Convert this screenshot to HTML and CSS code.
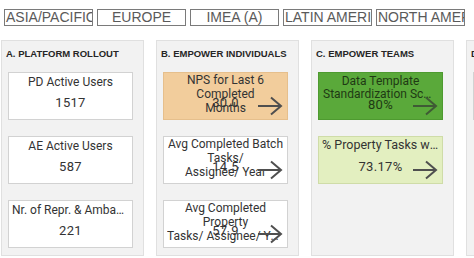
FILE: index.html
```html
<!DOCTYPE html>
<html lang="en">
<head>
    <meta charset="UTF-8">
    <title>Rollout Dashboard</title>
    <link rel="stylesheet" href="styles.css">
</head>
<body>
    <div class="slicers">
        <div class="slicer">ASIA/PACIFIC</div>
        <div class="slicer">EUROPE</div>
        <div class="slicer">IMEA (A)</div>
        <div class="slicer">LATIN AMERICA</div>
        <div class="slicer">NORTH AMERICA</div>
    </div>

    <div class="panels">
        <div class="panel">
            <div class="panel-title">A. PLATFORM ROLLOUT</div>
            <div class="cards">
                <div class="card single">
                    <div class="card-title"><span>PD Active Users</span></div>
                    <div class="card-value">1517</div>
                </div>
                <div class="card single">
                    <div class="card-title"><span>AE Active Users</span></div>
                    <div class="card-value">587</div>
                </div>
                <div class="card single">
                    <div class="card-title"><span>Nr. of Repr. &amp; Ambassadors</span></div>
                    <div class="card-value">221</div>
                </div>
            </div>
        </div>

        <div class="panel">
            <div class="panel-title">B. EMPOWER INDIVIDUALS</div>
            <div class="cards">
                <div class="card orange">
                    <div class="card-title"><span>NPS for Last 6</span><span>Completed</span><span>Months</span></div>
                    <div class="card-value">30.0</div>
                    <svg class="card-arrow" width="26" height="20" viewBox="0 0 26 20"><path d="M1 10H24M14 1.5L24 10L14 18.5"/></svg>
                </div>
                <div class="card">
                    <div class="card-title"><span>Avg Completed Batch</span><span>Tasks/</span><span>Assignee/ Year</span></div>
                    <div class="card-value">14.5</div>
                    <svg class="card-arrow" width="26" height="20" viewBox="0 0 26 20"><path d="M1 10H24M14 1.5L24 10L14 18.5"/></svg>
                </div>
                <div class="card">
                    <div class="card-title"><span>Avg Completed</span><span>Property</span><span>Tasks/ Assignee/ Year</span></div>
                    <div class="card-value">57.9</div>
                    <svg class="card-arrow" width="26" height="20" viewBox="0 0 26 20"><path d="M1 10H24M14 1.5L24 10L14 18.5"/></svg>
                </div>
            </div>
        </div>

        <div class="panel">
            <div class="panel-title">C. EMPOWER TEAMS</div>
            <div class="cards">
                <div class="card green">
                    <div class="card-title tight"><span>Data Template</span><span>Standardization Score</span></div>
                    <div class="card-value">80%</div>
                    <svg class="card-arrow" width="26" height="20" viewBox="0 0 26 20"><path d="M1 10H24M14 1.5L24 10L14 18.5"/></svg>
                </div>
                <div class="card lime">
                    <div class="card-title"><span>% Property Tasks with Template</span></div>
                    <div class="card-value">73.17%</div>
                    <svg class="card-arrow" width="26" height="20" viewBox="0 0 26 20"><path d="M1 10H24M14 1.5L24 10L14 18.5"/></svg>
                </div>
            </div>
        </div>

        <div class="panel">
            <div class="panel-title">D. ADOPTION</div>
            <div class="cards">
                <div class="card single">
                    <div class="card-title"><span>Active Users</span></div>
                    <div class="card-value">0</div>
                </div>
            </div>
        </div>
    </div>
</body>
</html>
```

FILE: styles.css
```css
* { box-sizing: border-box; margin: 0; padding: 0; }
body {
    width: 474px; height: 258px; overflow: hidden; background: #ffffff;
    font-family: Roboto, "DejaVu Sans", sans-serif; color: #333333;
}

/* region slicer */
.slicers { display: flex; gap: 4px; padding: 9px 0 0 4px; }
.slicer {
    flex: 0 0 89px; height: 17px; border: 1px solid #7a7a7a; overflow: hidden; white-space: nowrap;
    font-family: "Liberation Sans", Arial, sans-serif; font-size: 14px; line-height: 15px;
    color: #5a5a5a; text-align: center; padding: 0 1px;
}

/* columns */
.panels { display: grid; grid-template-columns: repeat(4, 143px); gap: 12px; padding: 14px 0 0 1px; }
.panel {
    height: 216px; background: #f2f2f2; border: 1px solid #e0e0e0; padding: 7px 0 0 3px; min-width: 0;
}
.panel-title {
    font-family: "Liberation Sans", Arial, sans-serif; font-weight: bold; font-size: 9.5px;
    line-height: 11px; color: #262626; white-space: nowrap; overflow: hidden; padding-left: 1px;
}
.cards { display: flex; flex-direction: column; gap: 16px; margin: 13px 0 0 3px; }

/* kpi card: title, value and arrow share one cell */
.card {
    display: grid; grid-template-columns: minmax(0, 1fr); width: 125px; height: 48px;
    background: #ffffff; border: 1px solid #d2d2d2; overflow: hidden;
}
.card > * { grid-area: 1 / 1; }
.card-title { align-self: start; min-width: 0; text-align: center; font-size: 12px; line-height: 14px; padding: 0 3px; }
.card-title span { display: block; white-space: nowrap; overflow: hidden; text-overflow: ellipsis; }
.card-title.tight { line-height: 13px; padding: 2px 4px 0; }
.card.single .card-title { padding-top: 2px; }
.card-value { align-self: end; text-align: center; font-size: 13px; line-height: 15px; padding-bottom: 9px; letter-spacing: 0.3px; }
.card-arrow { align-self: end; justify-self: end; margin: 0 4px 3px 0; }
.card-arrow path { fill: none; stroke: #4f4f4f; stroke-width: 2; }

.card.orange { background: #f2cd9c; border-color: #e6bf8c; }
.card.green { background: #5aa93a; border-color: #4e9a30; }
.card.green .card-title, .card.green .card-value { color: #1f3a14; }
.card.green .card-value { padding-bottom: 7px; }
.card.green .card-arrow path { stroke: #3f5a35; }
.card.lime { background: #e3efc0; border-color: #cfdca8; }
.card.lime .card-title { font-size: 12.5px; padding-top: 1px; }
```
